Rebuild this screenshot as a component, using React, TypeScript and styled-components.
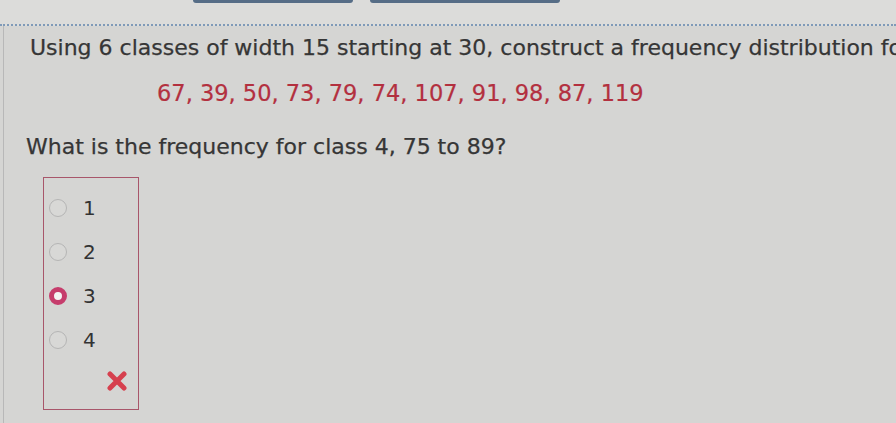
import React from "react";
import styled, { createGlobalStyle } from "styled-components";

const Global = createGlobalStyle`
  html, body { margin: 0; padding: 0; background: #d5d5d3; }
  body { font-family: "DejaVu Sans", Verdana, sans-serif; overflow: hidden; }
`;

const Page = styled.div`
  width: 896px;
  height: 423px;
  display: flex;
  flex-direction: column;
  overflow: hidden;
`;

const TopStrip = styled.div`
  background: #dcdcda;
  display: flex;
  gap: 17px;
  padding-left: 193px;
  border-bottom: 2px dotted #7f9ab8;
  box-sizing: border-box;
  height: 26px;
`;

const Tab = styled.div<{ w: number }>`
  width: ${(p) => p.w}px;
  height: 3px;
  background: #566d86;
  border-radius: 0 0 4px 4px;
`;

const Content = styled.div`
  flex: 1;
  margin-left: 3px;
  border-left: 1px solid #b8b8b8;
  padding: 7px 0 0 26px;
  display: flex;
  flex-direction: column;
`;

const Prompt = styled.div`
  font-size: 22px;
  color: #363636;
  white-space: nowrap;
  line-height: 30px;
  -webkit-text-stroke: 0.25px #363636;
`;

const Data = styled.div`
  font-size: 22.5px;
  color: #b3303f;
  margin: 15px 0 0 127px;
  line-height: 30px;
  white-space: nowrap;
  -webkit-text-stroke: 0.2px #b3303f;
`;

const Question = styled.div`
  font-size: 22px;
  color: #363636;
  margin: 24px 0 0 -4px;
  line-height: 30px;
  white-space: nowrap;
  -webkit-text-stroke: 0.25px #363636;
`;

const Choices = styled.div`
  margin: 15px 0 0 13px;
  width: 96px;
  height: 233px;
  box-sizing: border-box;
  border: 1.5px solid #a8566a;
  padding: 21px 0 0 5px;
  display: flex;
  flex-direction: column;
  gap: 26px;
`;

const Choice = styled.div`
  display: flex;
  align-items: center;
  gap: 16px;
  height: 18px;
  font-size: 20px;
  color: #333;
`;

const Radio = styled.span<{ checked?: boolean }>`
  width: 18px;
  height: 18px;
  box-sizing: border-box;
  border-radius: 50%;
  border: ${(p) => (p.checked ? "5.5px solid #c63d6c" : "1px solid #b5b5b5")};
  background: ${(p) => (p.checked ? "#f4f4f4" : "#d8d8d6")};
  flex: none;
`;

const Mark = styled.div`
  display: flex;
  justify-content: flex-end;
  padding-right: 10px;
  margin-top: -4px;
`;

export default function App() {
  const opts = ["1", "2", "3", "4"];
  return (
    <Page>
      <Global />
      <TopStrip>
        <Tab w={160} />
        <Tab w={190} />
      </TopStrip>
      <Content>
        <Prompt>
          Using 6 classes of width 15 starting at 30, construct a frequency distribution for the data.
        </Prompt>
        <Data>67, 39, 50, 73, 79, 74, 107, 91, 98, 87, 119</Data>
        <Question>What is the frequency for class 4, 75 to 89?</Question>
        <Choices>
          {opts.map((o) => (
            <Choice key={o}>
              <Radio checked={o === "3"} />
              {o}
            </Choice>
          ))}
          <Mark>
            <svg width="22" height="20" viewBox="0 0 22 20">
              <path d="M4 3 L18 17 M18 3 L4 17" stroke="#d6404e" strokeWidth="5" strokeLinecap="round" />
            </svg>
          </Mark>
        </Choices>
      </Content>
    </Page>
  );
}
